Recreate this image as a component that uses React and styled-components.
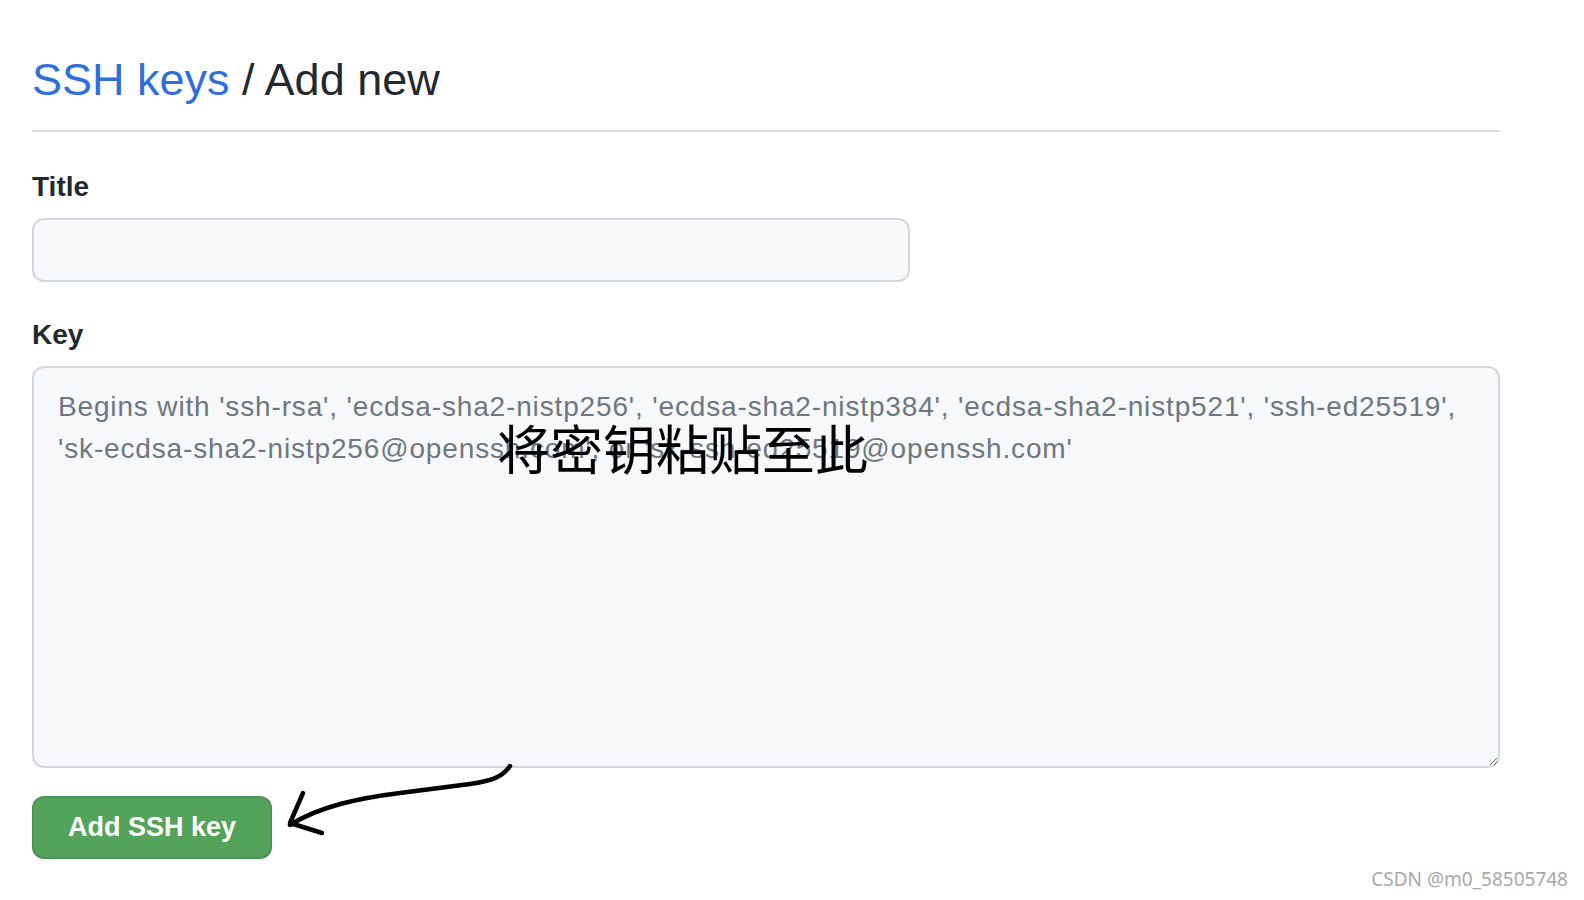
import React from 'react';
import styled, { createGlobalStyle } from 'styled-components';

const GlobalStyle = createGlobalStyle`
    body {
        margin: 0;
        background: #ffffff;
        font-family: "Liberation Sans", Arial, sans-serif;
        color: #24292f;
    }
`

const Page = styled.div`
    position: relative;
    width: 1584px;
    height: 900px;
    padding: 0 84px 0 32px;
    box-sizing: border-box;
    overflow: hidden;
`

const Header = styled.h1`
    margin: 0;
    padding-top: 52px;
    padding-bottom: 22px;
    font-size: 45px;
    font-weight: 400;
    line-height: 56px;
    border-bottom: 2px solid #d8dee4;
`

const Crumb = styled.a`
    color: #2f6fd8;
    text-decoration: none;
`

const Form = styled.form`
    display: flex;
    flex-direction: column;
    padding-top: 35px;
`

const Field = styled.div`
    display: flex;
    flex-direction: column;
    gap: 11px;
    margin-bottom: ${p => p.$last ? '28px' : '33px'};
`

const Label = styled.label`
    font-size: 28px;
    font-weight: 700;
    line-height: 40px;
`

const Input = styled.input`
    width: 878px;
    height: 64px;
    box-sizing: border-box;
    border: 2px solid #d0d7de;
    border-radius: 12px;
    background: #f6f8fa;
    padding: 10px 24px;
    font: inherit;
    font-size: 28px;
    outline: none;
`

const KeyBox = styled.div`
    position: relative;
`

const TextArea = styled.textarea`
    display: block;
    width: 100%;
    height: 402px;
    box-sizing: border-box;
    border: 2px solid #d0d7de;
    border-radius: 12px;
    background: #f6f8fa;
    padding: 18px 24px;
    font-family: "Liberation Sans", Arial, sans-serif;
    font-size: 28px;
    line-height: 42px;
    letter-spacing: 0.85px;
    color: #24292f;
    outline: none;
    resize: vertical;

    &::placeholder {
        color: #6e7781;
    }
`

const Note = styled.span`
    position: absolute;
    left: 465px;
    top: 55px;
    font-family: "Noto Sans CJK SC", sans-serif;
    font-size: 53px;
    line-height: 1;
    color: #000000;
    pointer-events: none;
`

const Button = styled.button`
    align-self: flex-start;
    height: 63px;
    padding: 0 34px;
    border: 2px solid rgba(27, 31, 36, 0.12);
    border-radius: 12px;
    background: #54a35b;
    color: #ffffff;
    font-family: "Liberation Sans", Arial, sans-serif;
    font-size: 27px;
    font-weight: 700;
    cursor: pointer;
`

const Arrow = styled.svg`
    position: absolute;
    left: 270px;
    top: 752px;
    overflow: visible;
`

const Watermark = styled.span`
    position: absolute;
    right: 16px;
    bottom: 8px;
    font-family: "Noto Sans", sans-serif;
    font-size: 19px;
    color: #a8a8a8;
`

const placeholder = "Begins with 'ssh-rsa', 'ecdsa-sha2-nistp256', 'ecdsa-sha2-nistp384', 'ecdsa-sha2-nistp521', 'ssh-ed25519',\n'sk-ecdsa-sha2-nistp256@openssh.com', or 'sk-ssh-ed25519@openssh.com'";

export default function App() {
    return (
        <Page>
            <GlobalStyle />
            <Header>
                <Crumb href="#">SSH keys</Crumb> / Add new
            </Header>
            <Form onSubmit={e => e.preventDefault()}>
                <Field>
                    <Label htmlFor="title">Title</Label>
                    <Input id="title" type="text" />
                </Field>
                <Field $last>
                    <Label htmlFor="key">Key</Label>
                    <KeyBox>
                        <TextArea id="key" placeholder={placeholder} />
                        <Note>将密钥粘贴至此</Note>
                    </KeyBox>
                </Field>
                <Button type="submit">Add SSH key</Button>
            </Form>
            <Arrow width="260" height="100" viewBox="0 0 260 100" fill="none" stroke="#000" strokeWidth="4.5" strokeLinecap="round" strokeLinejoin="round">
                <path d="M240 14 C232 26 220 29 200 32 L130 41 C90 46 50 54 20 73" />
                <path d="M33 41 L20 71 L52 81" />
            </Arrow>
            <Watermark>CSDN @m0_58505748</Watermark>
        </Page>
    )
}
